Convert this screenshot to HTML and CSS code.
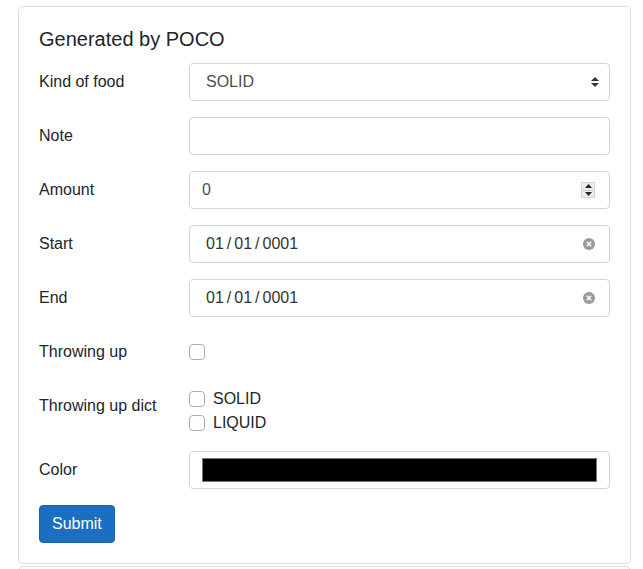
FILE: index.html
```html
<!DOCTYPE html>
<html lang="en">
<head>
    <meta charset="UTF-8" />
    <title>Generated by POCO</title>
    <link rel="stylesheet" href="styles.css">
</head>
<body>
    <div class="card">
        <div class="card-body">
            <h5 class="card-title">Generated by POCO</h5>

            <div class="form-row">
                <label class="col-label">Kind of food</label>
                <div class="field field-select">
                    <span class="value">SOLID</span>
                    <svg class="select-arrow" width="10" height="12" viewBox="0 0 10 12">
                        <path d="M1 5 L5 1 L9 5 Z M1 7 L5 11 L9 7 Z" fill="#333"/>
                    </svg>
                </div>
            </div>

            <div class="form-row">
                <label class="col-label">Note</label>
                <div class="field"></div>
            </div>

            <div class="form-row">
                <label class="col-label">Amount</label>
                <div class="field">
                    <span class="value">0</span>
                    <span class="spinner">
                        <span class="spin-half"><svg width="7" height="4" viewBox="0 0 7 4"><path d="M0 4 L3.5 0 L7 4 Z" fill="#222"/></svg></span>
                        <span class="spin-half"><svg width="7" height="4" viewBox="0 0 7 4"><path d="M0 0 L3.5 4 L7 0 Z" fill="#222"/></svg></span>
                    </span>
                </div>
            </div>

            <div class="form-row">
                <label class="col-label">Start</label>
                <div class="field field-date">
                    <span class="value">01<span class="sep">/</span>01<span class="sep">/</span>0001</span>
                    <svg class="clear-icon" width="12" height="12" viewBox="0 0 12 12">
                        <circle cx="6" cy="6" r="6" fill="#9a9a9a"/>
                        <path d="M3.8 3.8 L8.2 8.2 M8.2 3.8 L3.8 8.2" stroke="#fff" stroke-width="1.5"/>
                    </svg>
                </div>
            </div>

            <div class="form-row">
                <label class="col-label">End</label>
                <div class="field field-date">
                    <span class="value">01<span class="sep">/</span>01<span class="sep">/</span>0001</span>
                    <svg class="clear-icon" width="12" height="12" viewBox="0 0 12 12">
                        <circle cx="6" cy="6" r="6" fill="#9a9a9a"/>
                        <path d="M3.8 3.8 L8.2 8.2 M8.2 3.8 L3.8 8.2" stroke="#fff" stroke-width="1.5"/>
                    </svg>
                </div>
            </div>

            <div class="form-row">
                <label class="col-label">Throwing up</label>
                <div class="check-single">
                    <span class="check-box"></span>
                </div>
            </div>

            <div class="form-row">
                <label class="col-label">Throwing up dict</label>
                <div class="check-list">
                    <div class="check-item"><span class="check-box"></span><span>SOLID</span></div>
                    <div class="check-item"><span class="check-box"></span><span>LIQUID</span></div>
                </div>
            </div>

            <div class="form-row">
                <label class="col-label">Color</label>
                <div class="field field-color">
                    <span class="swatch"></span>
                </div>
            </div>

            <button class="btn-primary">Submit</button>
        </div>
    </div>
    <div class="card card-next"></div>
</body>
</html>
```

FILE: styles.css
```css
body {
    font-family: "Liberation Sans", Arial, sans-serif;
    font-size: 16px;
    color: #212529;
    background: #fff;
    margin: 0;
    padding: 6px 12px 0 18px;
}
.card {
    border: 1px solid #dcdcdc;
    border-radius: 5px;
    background: #fff;
}
.card-body {
    padding: 20px;
}
.card-next {
    margin-top: 2px;
    height: 20px;
}
.card-title {
    font-size: 20px;
    font-weight: normal;
    line-height: 24px;
    margin: 0 0 12px 0;
}
.form-row {
    display: grid;
    grid-template-columns: 150px 1fr;
    margin-bottom: 16px;
}
.col-label {
    padding: 7px 0;
    line-height: 24px;
}
.field {
    height: 38px;
    box-sizing: border-box;
    border: 1px solid #ced4da;
    border-radius: 4px;
    padding: 0 12px;
    display: flex;
    align-items: center;
    justify-content: space-between;
    color: #495057;
    line-height: 24px;
}
.field-select {
    padding-left: 16px;
}
.select-arrow {
    margin-right: -3px;
}
.field-date {
    padding-left: 16px;
    color: #333;
}
.sep {
    margin: 0 3px;
}
.clear-icon {
    margin-right: 2px;
}
.spinner {
    display: flex;
    flex-direction: column;
    width: 14px;
    height: 16px;
    margin-right: 2px;
    background: #ececec;
    border: 1px solid #d4d4d4;
    box-sizing: border-box;
}
.spin-half {
    flex: 1;
    display: flex;
    align-items: center;
    justify-content: center;
}
.spin-half + .spin-half {
    border-top: 1px solid #cfcfcf;
}
.check-single {
    display: flex;
    align-items: center;
    height: 38px;
}
.check-item {
    display: flex;
    align-items: center;
    gap: 8px;
    line-height: 24px;
}
.check-box {
    display: inline-block;
    width: 16px;
    height: 16px;
    box-sizing: border-box;
    border: 1px solid #a8aeb5;
    border-radius: 4px;
    background: #fff;
}
.field-color {
    padding: 6px 12px;
}
.swatch {
    display: block;
    width: 100%;
    height: 24px;
    background: #000;
    border: 1px solid #777;
    box-sizing: border-box;
}
.btn-primary {
    font-family: inherit;
    font-size: 16px;
    line-height: 24px;
    color: #fff;
    background: #1b6ec2;
    border: 1px solid #1861ac;
    border-radius: 4px;
    padding: 6px 12px;
    cursor: pointer;
}
```
